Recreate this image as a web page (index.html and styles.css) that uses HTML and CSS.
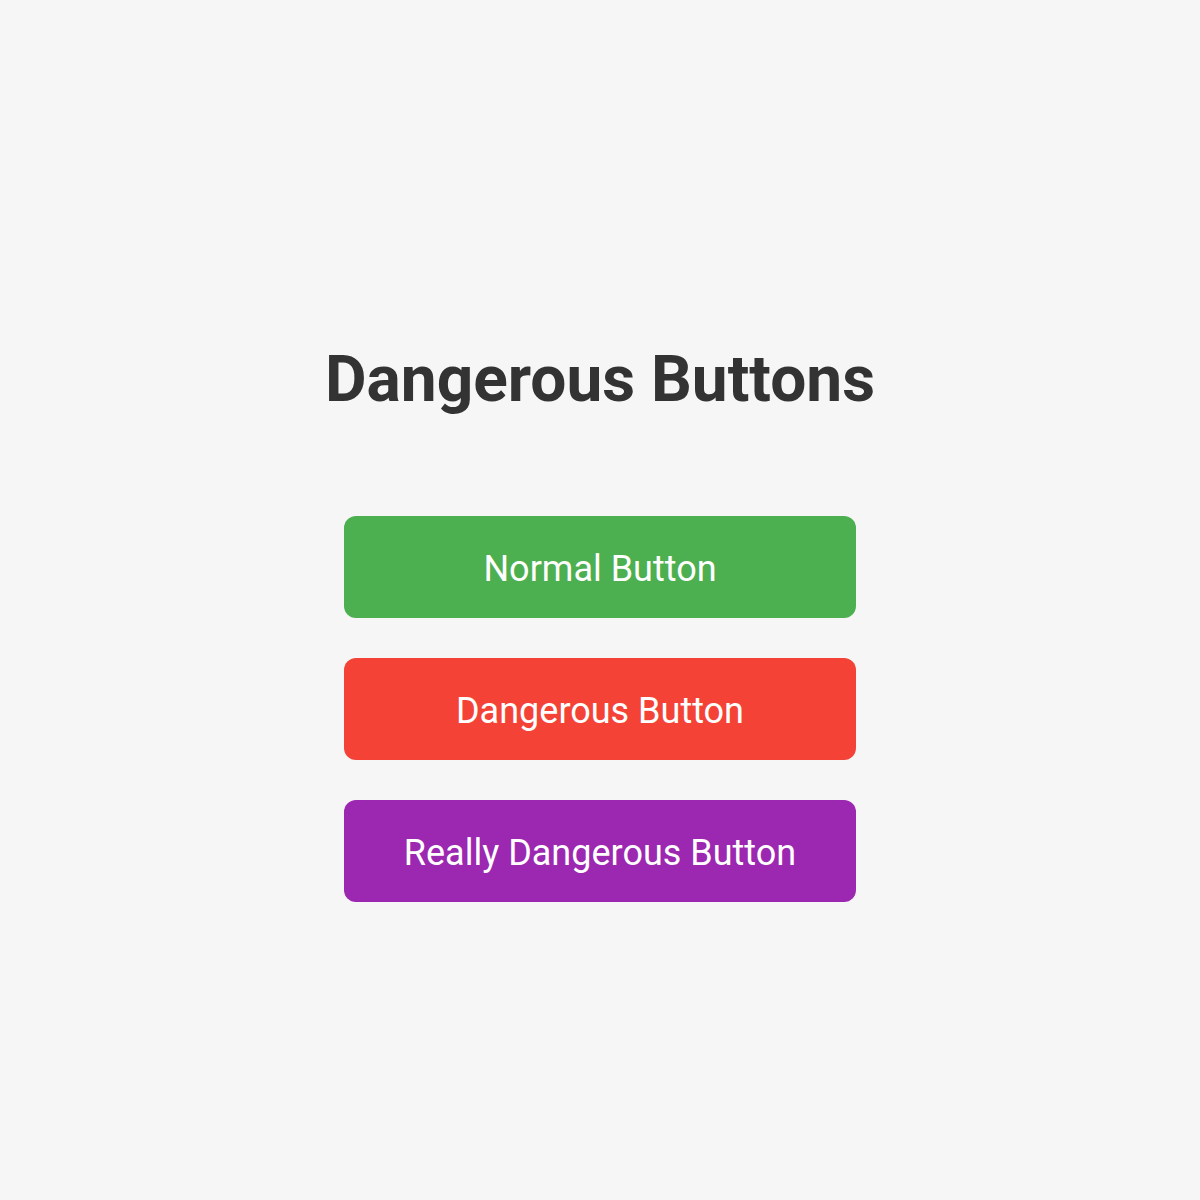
FILE: index.html
```html
<!DOCTYPE html>
<html lang="en">

<head>
  <meta charset="UTF-8">
  <meta name="viewport" content="width=device-width, initial-scale=1.0">
  <title>Dangerous Buttons</title>
  <link rel="stylesheet" href="styles.css">
</head>

<body>
  <main class="page">
    <h1 class="title">Dangerous Buttons</h1>
    <div class="buttons">
      <button class="btn normal">Normal Button</button>
      <button class="btn danger">Dangerous Button</button>
      <button class="btn really-danger">Really Dangerous Button</button>
    </div>
  </main>
</body>

</html>
```

FILE: styles.css
```css
body {
  margin: 0;
  font-family: Roboto, "Liberation Sans", sans-serif;
  background-color: #f6f6f6;
}

.page {
  display: flex;
  flex-direction: column;
  align-items: center;
  justify-content: center;
  min-height: 100vh;
}

.title {
  font-size: 64px;
  font-weight: bold;
  color: #333;
  margin: 44px 0 99px;
}

.buttons {
  display: flex;
  flex-direction: column;
  gap: 40px;
}

.btn {
  width: 512px;
  height: 102px;
  padding: 3px 0 0;
  border: none;
  border-radius: 12px;
  color: white;
  font-family: Roboto, "Liberation Sans", sans-serif;
  font-size: 36px;
  cursor: pointer;
}

.normal {
  background-color: #4caf50;
}

.danger {
  background-color: #f44336;
}

.really-danger {
  background-color: #9c27b0;
}
```
